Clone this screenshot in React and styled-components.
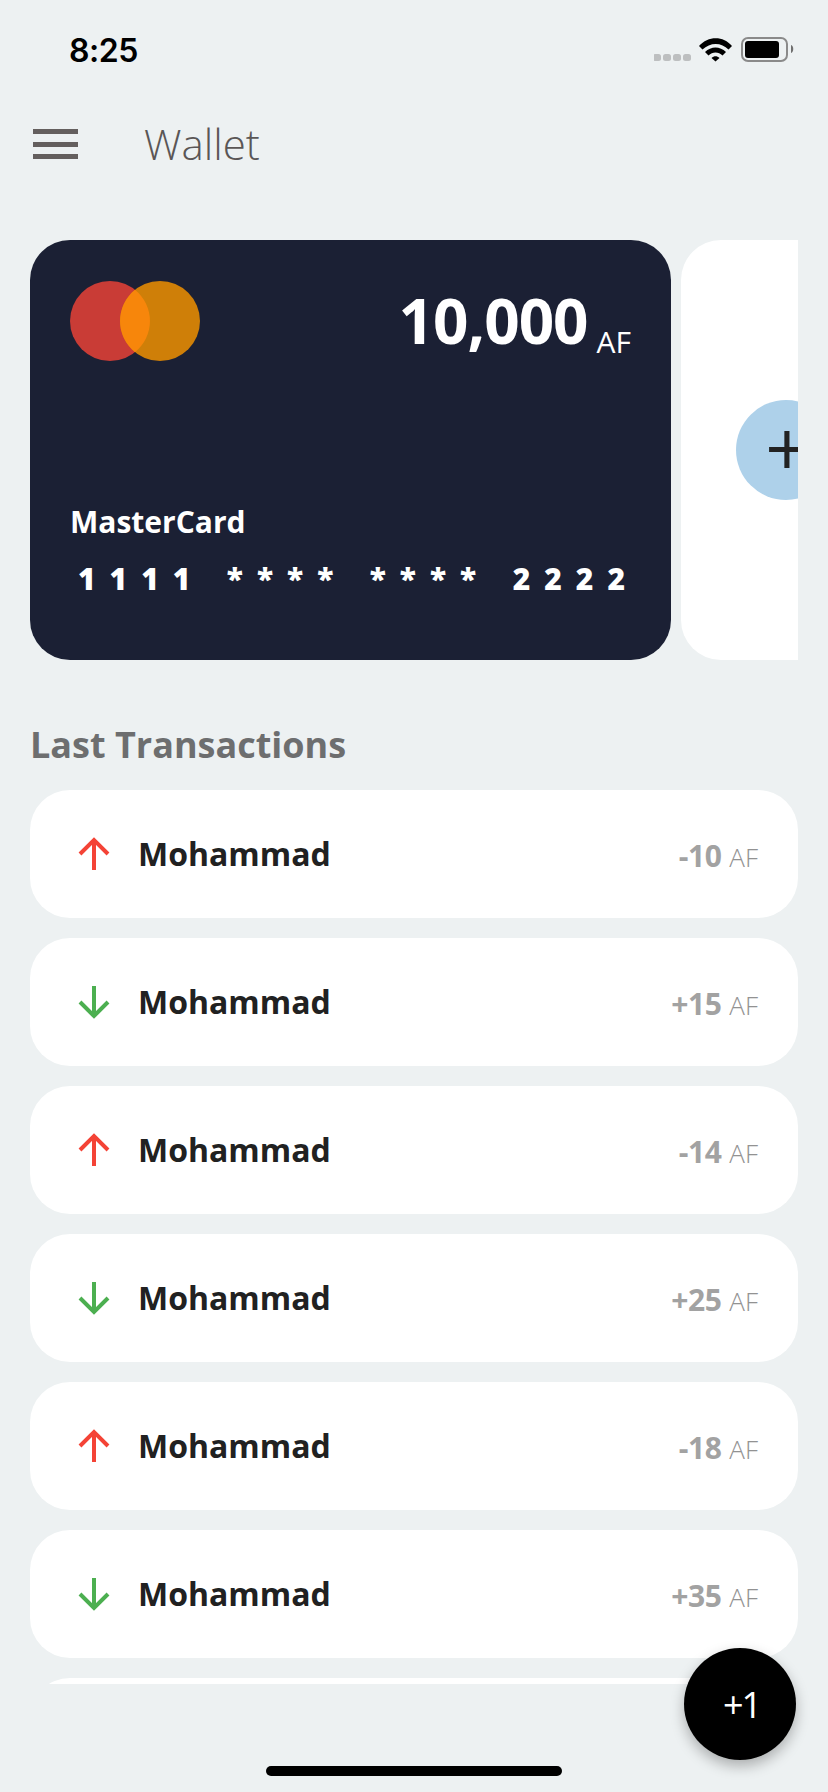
import React from "react";
import styled, { createGlobalStyle } from "styled-components";

const Global = createGlobalStyle`
  html, body { margin: 0; padding: 0; background: #edf1f2; }
  * { box-sizing: border-box; }
`;

const Page = styled.div`
  position: relative;
  width: 828px;
  height: 1792px;
  overflow: hidden;
  background: #edf1f2;
  font-family: "Open Sans", sans-serif;
  display: flex;
  flex-direction: column;
`;

const StatusBar = styled.div`
  height: 98px;
  padding: 32px 32px 0 69px;
  display: flex;
  justify-content: space-between;
  align-items: flex-start;
`;

const Time = styled.div`
  font-family: "Inter", sans-serif;
  font-weight: 600;
  font-size: 32px;
  line-height: 38px;
  letter-spacing: -0.5px;
  color: #000;
`;

const StatusIcons = styled.div`
  display: flex;
  align-items: flex-start;
  padding-top: 5px;
`;

const Header = styled.header`
  height: 92px;
  padding-left: 33px;
  display: flex;
  align-items: center;
  gap: 66px;
`;

const MenuIcon = styled.div`
  width: 45px;
  display: flex;
  flex-direction: column;
  gap: 7.500px;
`;

const MenuBar = styled.span`
  display: block;
  height: 5px;
  background: #645f5e;
`;

const Title = styled.h1`
  margin: 0;
  font-size: 42px;
  line-height: 56px;
  font-weight: 300;
  color: #5a5656;
`;

const Carousel = styled.div`
  margin: 50px 30px 0;
  height: 420px;
  display: flex;
  gap: 10px;
  overflow: hidden;
`;

const BankCard = styled.div`
  flex: 0 0 641px;
  min-width: 0;
  border-radius: 40px;
  background: #1b2034;
  color: #fff;
  padding: 41px 40px 0;
  display: flex;
  flex-direction: column;
`;

const CardTop = styled.div`
  display: flex;
  justify-content: space-between;
  height: 221px;
`;

const Balance = styled.div`
  display: flex;
  align-items: flex-start;
  gap: 9px;
`;

const BalanceValue = styled.span`
  font-size: 62px;
  line-height: 78px;
  font-weight: 700;
  letter-spacing: -1px;
`;

const BalanceUnit = styled.span`
  margin-top: 41px;
  font-size: 30px;
  line-height: 40px;
  font-weight: 400;
`;

const CardName = styled.div`
  font-size: 30px;
  line-height: 40px;
  font-weight: 700;
`;

const CardNumber = styled.div`
  margin-top: 17px;
  padding-left: 8px;
  display: flex;
  justify-content: space-between;
  width: 555px;
  font-size: 30px;
  line-height: 40px;
  font-weight: 800;
`;

const NumberGroup = styled.span`
  letter-spacing: 14px;
  margin-right: -14px;
  white-space: nowrap;
`;

const AddCard = styled.div`
  flex: 0 0 180px;
  border-radius: 40px;
  background: #fff;
  padding-left: 55px;
  display: flex;
  align-items: center;
`;

const AddCircle = styled.div`
  width: 100px;
  height: 100px;
  border-radius: 50%;
  background: #aed1ea;
  color: #222;
  font-size: 76px;
  font-weight: 400;
  line-height: 96px;
  text-align: center;
  padding-left: 2px;
`;

const SectionTitle = styled.h2`
  margin: 60px 0 0 30px;
  font-size: 36px;
  line-height: 50px;
  font-weight: 700;
  color: #6d6e6f;
`;

const List = styled.div`
  margin: 20px 30px 0;
  height: 894px;
  overflow: hidden;
  display: flex;
  flex-direction: column;
  gap: 20px;
`;

const Row = styled.div`
  flex: 0 0 128px;
  border-radius: 40px;
  background: #fff;
  padding: 0 40px 0 48px;
  display: flex;
  align-items: center;
`;

const RowName = styled.span`
  margin-left: 28px;
  flex: 1;
  font-size: 32px;
  line-height: 40px;
  font-weight: 700;
  color: #212121;
`;

const Amount = styled.div`
  display: flex;
  align-items: baseline;
  gap: 8px;
  color: #a2a2a2;
  padding-top: 2px;
`;

const AmountValue = styled.span`
  font-size: 30px;
  font-weight: 700;
  letter-spacing: -0.5px;
`;

const AmountUnit = styled.span`
  font-size: 26px;
  font-weight: 300;
  color: #929292;
`;

const Fab = styled.button`
  position: absolute;
  left: 684px;
  top: 1648px;
  width: 112px;
  height: 112px;
  border: 0;
  padding: 0 0 0 3px;
  border-radius: 50%;
  background: #000;
  color: #fff;
  font-family: "Open Sans", sans-serif;
  font-size: 36px;
  font-weight: 500;
  letter-spacing: -2px;
  box-shadow: 0 6px 14px rgba(0, 0, 0, 0.28);
`;

const HomeBar = styled.div`
  position: absolute;
  left: 266px;
  top: 1766px;
  width: 296px;
  height: 10px;
  border-radius: 5px;
  background: #000;
`;

const Arrow = ({ up }) => (
  <svg width="32" height="34" viewBox="0 0 32 34" fill="none" stroke={up ? "#f44336" : "#4caf50"} strokeWidth="4">
    {up ? (
      <path d="M16 33V3M2 17L16 3l14 14" />
    ) : (
      <path d="M16 1v30M2 17l14 14 14-14" />
    )}
  </svg>
);

const Signal = () => (
  <svg width="142" height="26" viewBox="0 0 142 26">
    <g fill="#bdbfc0">
      <rect x="-1" y="17" width="8" height="7" rx="2.500" />
      <rect x="9" y="17" width="8" height="7" rx="2.500" />
      <rect x="19" y="17" width="8" height="7" rx="2.500" />
      <rect x="29" y="17" width="8" height="7" rx="2.500" />
    </g>
    <g fill="#000">
      <path d="M45 9C54 -1.500 69.500 -1.500 78 9L74.500 12.500C67.500 5 56 5 48.500 12.500Z" />
      <path d="M51 15C57 9 66 9 72 15L68.500 18.500C64.500 14.500 58.500 14.500 54.500 18.500Z" />
      <path d="M57.500 21C60 18.500 63 18.500 65.500 21L61.500 24.500Z" />
    </g>
    <rect x="88" y="1" width="45" height="23" rx="6" fill="none" stroke="#8a8a8a" strokeWidth="2" />
    <rect x="91" y="4" width="34" height="17" rx="3" fill="#000" />
    <path d="M137 8c3 1 3 7 0 8z" fill="#6f6f6f" />
  </svg>
);

const MasterLogo = () => (
  <svg width="130" height="80" viewBox="0 0 130 80">
    <circle cx="40" cy="40" r="40" fill="#c93c36" />
    <circle cx="90" cy="40" r="40" fill="#cf7f08" />
    <path d="M65 8.800a40 40 0 0 1 0 62.400a40 40 0 0 1 0-62.400z" fill="#f7860b" />
  </svg>
);

const rows = [
  { up: true, value: "-10" },
  { up: false, value: "+15" },
  { up: true, value: "-14" },
  { up: false, value: "+25" },
  { up: true, value: "-18" },
  { up: false, value: "+35" },
  { up: true, value: "-20" },
];

export default function App() {
  return (
    <Page>
      <Global />
      <StatusBar>
        <Time>8:25</Time>
        <StatusIcons>
          <Signal />
        </StatusIcons>
      </StatusBar>
      <Header>
        <MenuIcon>
          <MenuBar />
          <MenuBar />
          <MenuBar />
        </MenuIcon>
        <Title>Wallet</Title>
      </Header>
      <Carousel>
        <BankCard>
          <CardTop>
            <MasterLogo />
            <Balance>
              <BalanceValue>10,000</BalanceValue>
              <BalanceUnit>AF</BalanceUnit>
            </Balance>
          </CardTop>
          <CardName>MasterCard</CardName>
          <CardNumber>
            <NumberGroup>1111</NumberGroup>
            <NumberGroup>****</NumberGroup>
            <NumberGroup>****</NumberGroup>
            <NumberGroup>2222</NumberGroup>
          </CardNumber>
        </BankCard>
        <AddCard>
          <AddCircle>+</AddCircle>
        </AddCard>
      </Carousel>
      <SectionTitle>Last Transactions</SectionTitle>
      <List>
        {rows.map((r, i) => (
          <Row key={i}>
            <Arrow up={r.up} />
            <RowName>Mohammad</RowName>
            <Amount>
              <AmountValue>{r.value}</AmountValue>
              <AmountUnit>AF</AmountUnit>
            </Amount>
          </Row>
        ))}
      </List>
      <Fab>+1</Fab>
      <HomeBar />
    </Page>
  );
}
